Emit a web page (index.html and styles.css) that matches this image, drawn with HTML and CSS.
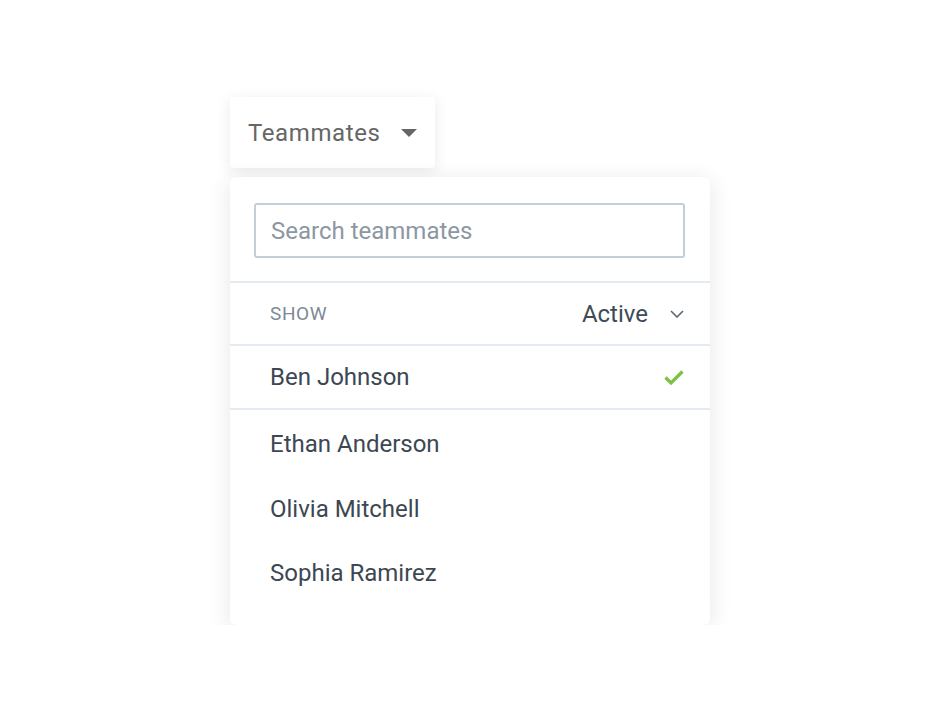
FILE: index.html
```html
<!DOCTYPE html>
<html lang="en">

<head>
  <meta charset="UTF-8">
  <meta name="viewport" content="width=device-width, initial-scale=1.0">
  <title>Teammates</title>
  <link rel="stylesheet" href="styles.css">
</head>

<body>
  <div class="picker">
    <button class="toggle">
      <span>Teammates</span>
      <span class="caret"></span>
    </button>
    <div class="panel">
      <div class="search">
        <input type="text" placeholder="Search teammates">
      </div>
      <div class="show">
        <span class="show-label">SHOW</span>
        <span class="show-value">Active
          <svg width="14" height="8" viewBox="0 0 14 8"><path d="M1 1l6 6 6-6" fill="none" stroke="#5c6670" stroke-width="1.6"/></svg>
        </span>
      </div>
      <div class="selected">
        <span>Ben Johnson</span>
        <svg width="20" height="15" viewBox="0 0 20 15"><path d="M1.5 7.5l5.5 5.5L18.5 1.5" fill="none" stroke="#7cc142" stroke-width="3.2"/></svg>
      </div>
      <ul class="list">
        <li>Ethan Anderson</li>
        <li>Olivia Mitchell</li>
        <li>Sophia Ramirez</li>
      </ul>
    </div>
  </div>
</body>

</html>
```

FILE: styles.css
```css
* {
  margin: 0;
  padding: 0;
  box-sizing: border-box;
  list-style: none;
  outline: none;
}

body {
  background: #fff;
  font-family: Roboto, "Liberation Sans", sans-serif;
  color: #3c4753;
}

.picker {
  width: 480px;
  margin: 97px 0 0 230px;
}

.toggle {
  display: flex;
  align-items: center;
  width: 205px;
  height: 71px;
  padding: 0 18px;
  border: none;
  border-radius: 3px;
  background: #fff;
  box-shadow: 0 3px 14px rgba(40, 50, 60, 0.1);
  font-family: inherit;
  font-size: 24px;
  letter-spacing: 0.6px;
  color: #666;
  cursor: pointer;
}

.caret {
  margin-left: 21px;
  border-left: 8px solid transparent;
  border-right: 8px solid transparent;
  border-top: 8px solid #666;
}

.panel {
  margin-top: 9px;
  background: #fff;
  border-radius: 6px;
  box-shadow: 0 4px 22px rgba(40, 50, 60, 0.12);
  overflow: hidden;
}

.search {
  padding: 26px 24px 23px 24px;
  border-bottom: 2px solid #e4eaf1;
}

.search input {
  display: block;
  width: 431px;
  height: 55px;
  padding: 0 15px;
  border: 2px solid #c3ced8;
  border-radius: 3px;
  font-family: inherit;
  font-size: 24px;
  color: #3c4753;
}

.search input::placeholder {
  color: #8c97a2;
}

.show {
  display: flex;
  justify-content: space-between;
  align-items: center;
  height: 63px;
  padding: 0 26px 0 40px;
  border-bottom: 2px solid #e4eaf1;
}

.show-label {
  font-size: 19px;
  letter-spacing: 0.6px;
  color: #7d8a97;
}

.show-value {
  display: flex;
  align-items: center;
  gap: 22px;
  font-size: 24px;
  color: #3e4b57;
}

.selected {
  display: flex;
  justify-content: space-between;
  align-items: center;
  height: 64px;
  padding: 0 26px 0 40px;
  border-bottom: 2px solid #e4eaf1;
  font-size: 24px;
}

.list {
  padding: 2px 0 19px;
}

.list li {
  display: flex;
  align-items: center;
  height: 64.5px;
  padding-left: 40px;
  font-size: 24px;
}
```
